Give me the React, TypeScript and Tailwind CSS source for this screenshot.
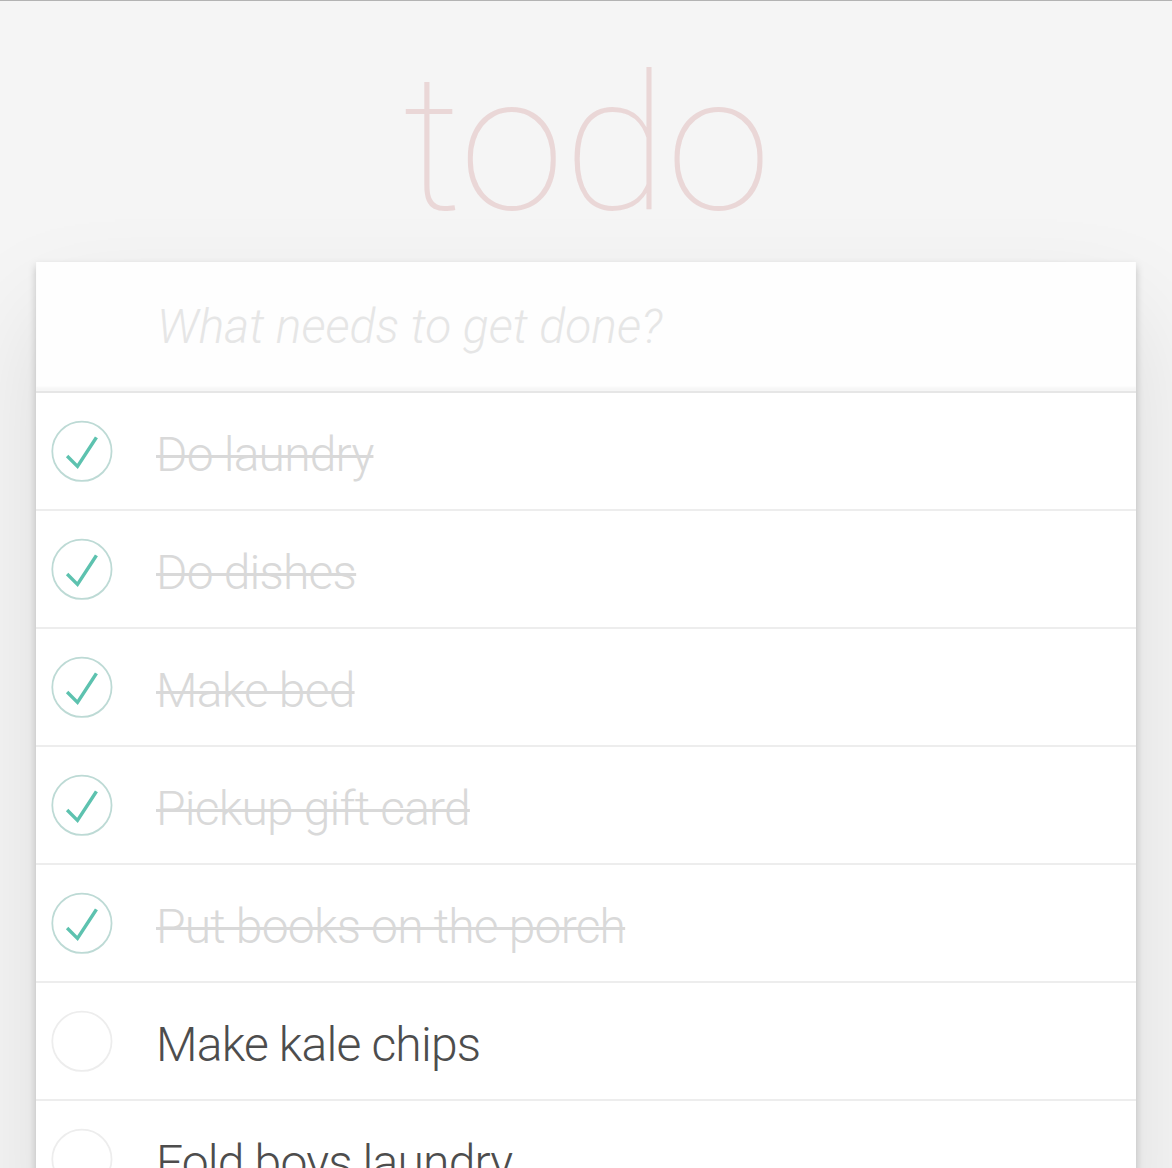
import React from "react";

const items: { text: string; done: boolean }[] = [
  { text: "Do laundry", done: true },
  { text: "Do dishes", done: true },
  { text: "Make bed", done: true },
  { text: "Pickup gift card", done: true },
  { text: "Put books on the porch", done: true },
  { text: "Make kale chips", done: false },
  { text: "Fold boys laundry", done: false },
];

function Toggle({ done }: { done: boolean }) {
  return (
    <svg width="80" height="80" viewBox="-10 -18 100 135" className="shrink-0">
      <circle cx="50" cy="50" r="50" fill="none" stroke={done ? "#bddad5" : "#ededed"} strokeWidth="3" />
      {done && <path fill="#5dc2af" d="M72 25L42 71 27 56l-4 4 20 20 34-52z" />}
    </svg>
  );
}

export default function App() {
  return (
    <div className="min-h-screen overflow-hidden bg-[#f5f5f5] border-t border-[#b3b3b3] font-['Helvetica_Neue',Roboto,'Liberation_Sans',sans-serif]">
      <h1 className="h-[261px] pt-[48px] text-center text-[190px] leading-[190px] font-thin text-[rgba(175,47,47,0.15)] tracking-[-1px]">
        todo
      </h1>
      <div className="mx-[36px] bg-white shadow-[0_4px_8px_rgba(0,0,0,0.2),0_50px_100px_rgba(0,0,0,0.1)]">
        <div className="h-[129px] flex items-center pl-[120px] bg-[rgba(0,0,0,0.003)] shadow-[inset_0_-4px_2px_rgba(0,0,0,0.03)]">
          <span className="text-[48px] italic font-light text-[#e6e6e6] pl-[1px]">What needs to get done?</span>
        </div>
        <div className="border-t-2 border-[#e6e6e6]">
          {items.map((it) => (
            <div key={it.text} className="h-[118px] border-b-2 border-[#ededed] flex items-center">
              <Toggle done={it.done} />
              <span
                className={
                  "ml-[40px] pt-[7px] text-[48px] font-light leading-none tracking-[-0.8px] " +
                  (it.done
                    ? "text-[#d9d9d9] line-through decoration-[#d9d9d9] decoration-[3px]"
                    : "text-[#4d4d4d]")
                }
              >
                {it.text}
              </span>
            </div>
          ))}
        </div>
      </div>
    </div>
  );
}
